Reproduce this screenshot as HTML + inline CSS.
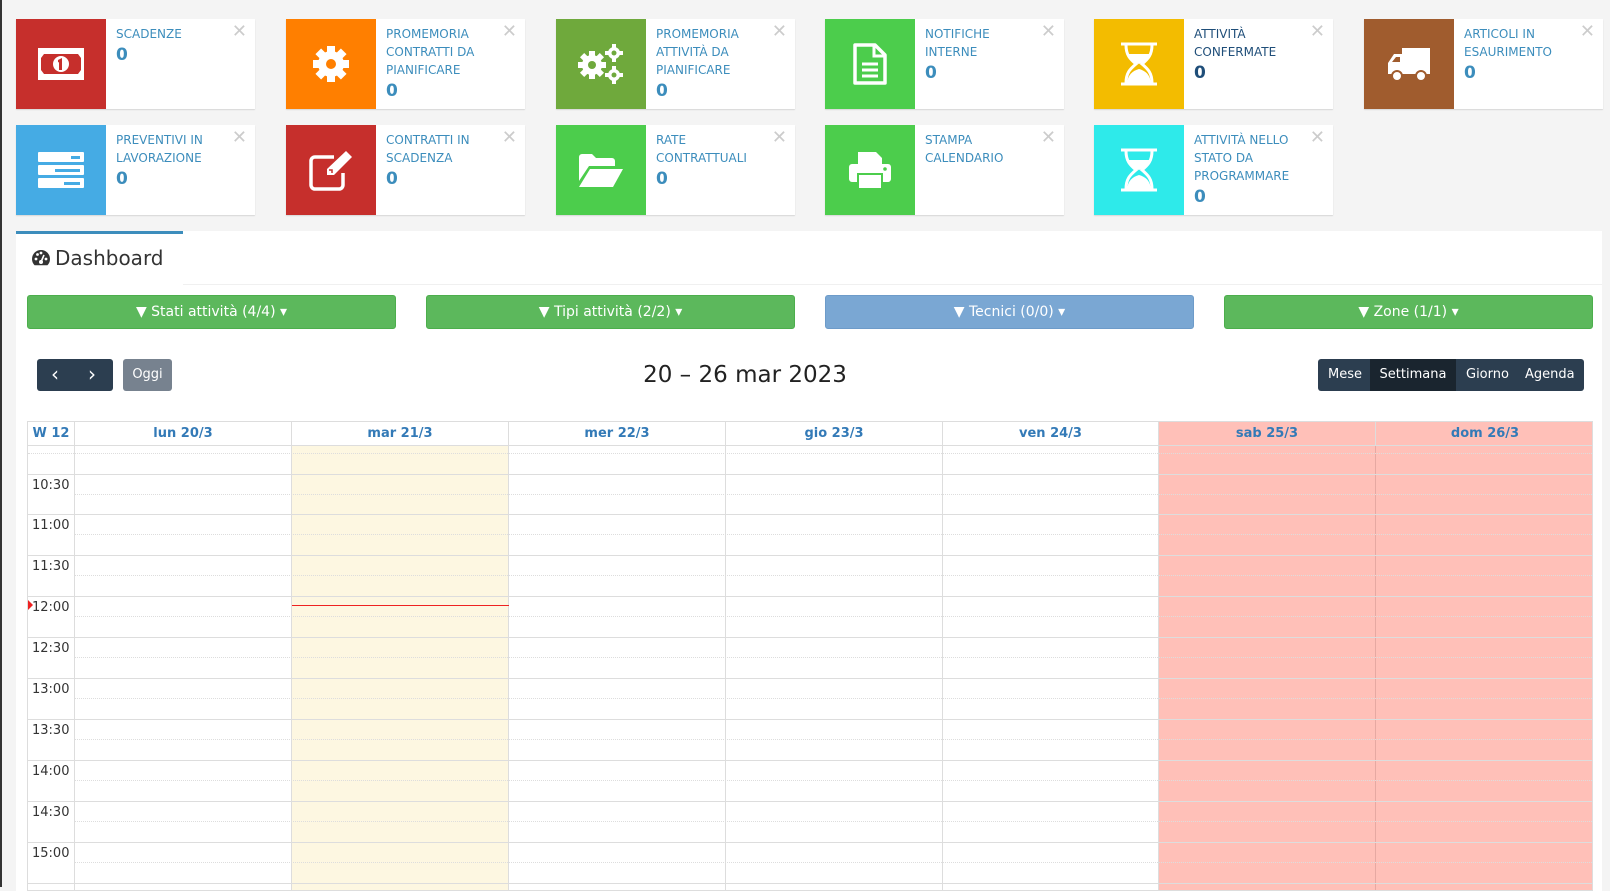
<!DOCTYPE html>
<html><head><meta charset="utf-8"><style>
*{box-sizing:border-box;margin:0;padding:0}
body{width:1610px;height:887px;overflow:hidden;background:#f4f4f4;font-family:"DejaVu Sans","Liberation Sans",sans-serif;position:relative}
.edge{position:absolute;left:0;top:0;width:2px;height:887px;background:#333}
.card{position:absolute;width:239px;height:90px;background:#fff;box-shadow:0 1px 1px rgba(0,0,0,.12)}
.card .ic{position:absolute;left:0;top:0;width:90px;height:90px;display:flex;align-items:center;justify-content:center}
.card .t{position:absolute;left:100px;top:6px;width:120px;font-size:12px;line-height:18px;color:#3c8dbc;text-transform:uppercase}
.card .t b{display:block;font-size:17px;line-height:20px;margin-top:2px}
.card .x{position:absolute;right:8px;top:2px;color:#ccc;font-size:18px}
.panel{position:absolute;left:16px;top:231px;width:1586px;height:660px;background:#fff}
.tab{position:absolute;left:16px;top:231px;width:167px;height:54px;border-top:3px solid #3c8dbc;background:#fff;font-size:20px;color:#333;padding:12px 0 0 15px}
.tabline{position:absolute;left:183px;top:284px;width:1419px;height:1px;background:#f0f0f0}
.fb{position:absolute;top:295px;width:369px;height:34px;border-radius:3px;color:#fff;font-size:14px;text-align:center;line-height:32px;background:#5cb85c;border:1px solid #4cae4c}
.nav{position:absolute;top:359px;height:32px;border-radius:3px;background:#2c3e50;color:#fff}
.title{position:absolute;left:545px;width:400px;top:362px;text-align:center;font-size:23px;color:#222}
.cal{position:absolute;left:27px;top:421px;width:1566px;height:470px;border:1px solid #ddd;overflow:hidden}
.hd{position:absolute;top:0;height:24px;border-right:1px solid #ddd;border-bottom:1px solid #ddd;font-size:13px;font-weight:bold;color:#337ab7;text-align:center;line-height:24px}
.col{position:absolute;top:24px;bottom:0;border-right:1px solid #ddd}
.hl{position:absolute;left:0;right:0;height:1px;background:#ddd}
.dl{position:absolute;left:46px;right:0;height:0;border-top:1px dotted #ddd}
.lb{position:absolute;left:4px;font-size:13px;color:#333}
</style></head><body>
<div class="edge"></div>

<div class="card" style="left:16px;top:19px"><div class="ic" style="background:#c62f2c"><svg width="50" height="36" viewBox="0 0 50 36"><path d="M2 2h46v32H2z" fill="#fff"/><path d="M8 8h34l3 4v12l-3 4H8l-3-4V12z" fill="#c62f2c"/><circle cx="25" cy="18" r="8" fill="#fff"/><path d="M22 14l4-2v12h-3v-8l-1 .5z" fill="#c62f2c"/></svg></div><div class="t">Scadenze<b>0</b></div><div class="x">✕</div></div>
<div class="card" style="left:286px;top:19px"><div class="ic" style="background:#ff7f00"><svg width="40" height="40" viewBox="0 0 40 40"><g fill="#fff"><circle cx="20" cy="20" r="13"/><rect x="16" y="2" width="8" height="36"/><rect x="2" y="16" width="36" height="8"/><rect x="16" y="2" width="8" height="36" transform="rotate(45 20 20)"/><rect x="16" y="2" width="8" height="36" transform="rotate(-45 20 20)"/></g><circle cx="20" cy="20" r="5" fill="#ff7f00"/></svg></div><div class="t">Promemoria contratti da pianificare<b>0</b></div><div class="x">✕</div></div>
<div class="card" style="left:556px;top:19px"><div class="ic" style="background:#6fa93c"><svg width="50" height="42" viewBox="0 0 50 42"><g fill="#fff"><circle cx="16" cy="22" r="10"/><rect x="13" y="8" width="6" height="28"/><rect x="2" y="19" width="28" height="6"/><rect x="13" y="8" width="6" height="28" transform="rotate(45 16 22)"/><rect x="13" y="8" width="6" height="28" transform="rotate(-45 16 22)"/><circle cx="38" cy="10" r="6"/><circle cx="38" cy="32" r="6"/><rect x="36" y="1" width="4" height="18"/><rect x="29" y="8" width="18" height="4"/><rect x="36" y="23" width="4" height="18"/><rect x="29" y="30" width="18" height="4"/></g><circle cx="16" cy="22" r="4" fill="#6fa93c"/><circle cx="38" cy="10" r="2.5" fill="#6fa93c"/><circle cx="38" cy="32" r="2.5" fill="#6fa93c"/></svg></div><div class="t">Promemoria attività da pianificare<b>0</b></div><div class="x">✕</div></div>
<div class="card" style="left:825px;top:19px"><div class="ic" style="background:#4ccd4c"><svg width="36" height="44" viewBox="0 0 36 44"><path d="M3 3h20l10 10v28H3z" fill="none" stroke="#fff" stroke-width="3.5" stroke-linejoin="round"/><path d="M22 3v11h11M10 22h16M10 28h16M10 34h16" stroke="#fff" stroke-width="3" fill="none"/></svg></div><div class="t">Notifiche interne<b>0</b></div><div class="x">✕</div></div>
<div class="card" style="left:1094px;top:19px"><div class="ic" style="background:#f3bc00"><svg width="40" height="46" viewBox="0 0 40 46"><path d="M2 3h36M2 43h36" stroke="#fff" stroke-width="3"/><path d="M7 4c0 10 4 14 10 19c-6 5-10 9-10 19h26c0-10-4-14-10-19c6-5 10-9 10-19" fill="none" stroke="#fff" stroke-width="3"/><path d="M9 13h22c-2 5-6 8-11 10c-5-2-9-5-11-10zM8 42c1-8 5-12 12-14c7 2 11 6 12 14z" fill="#fff"/></svg></div><div class="t" style="color:#1f4e79">Attività confermate<b>0</b></div><div class="x">✕</div></div>
<div class="card" style="left:1364px;top:19px"><div class="ic" style="background:#a05c2e"><svg width="46" height="38" viewBox="0 0 46 38"><path d="M16 3h28v26H16zM2 18l6-9h10v20H2z" fill="#fff"/><path d="M6 17l4-5h4v5z" fill="#a05c2e"/><circle cx="11" cy="31" r="5" fill="#fff" stroke="#a05c2e" stroke-width="2"/><circle cx="35" cy="31" r="5" fill="#fff" stroke="#a05c2e" stroke-width="2"/></svg></div><div class="t">Articoli in esaurimento<b>0</b></div><div class="x">✕</div></div>

<div class="card" style="left:16px;top:125px"><div class="ic" style="background:#45abe4"><svg width="46" height="38" viewBox="0 0 46 38"><g fill="#fff"><rect x="0" y="1" width="46" height="10" rx="1"/><rect x="0" y="14" width="46" height="10" rx="1"/><rect x="0" y="27" width="46" height="10" rx="1"/></g><g fill="#45abe4"><rect x="33" y="5" width="9" height="3"/><rect x="17" y="18" width="25" height="3"/><rect x="26" y="31" width="16" height="3"/></g></svg></div><div class="t">Preventivi in lavorazione<b>0</b></div><div class="x">✕</div></div>
<div class="card" style="left:286px;top:125px"><div class="ic" style="background:#c62f2c"><svg width="46" height="42" viewBox="0 0 46 42"><path d="M26 8H7a4 4 0 0 0-4 4v24a4 4 0 0 0 4 4h24a4 4 0 0 0 4-4V24" fill="none" stroke="#fff" stroke-width="3.5"/><path d="M38 2l6 6-18 18h-7v-6z" fill="#fff"/><path d="M21 21h3v3" stroke="#c62f2c" stroke-width="1.5" fill="none"/></svg></div><div class="t">Contratti in scadenza<b>0</b></div><div class="x">✕</div></div>
<div class="card" style="left:556px;top:125px"><div class="ic" style="background:#4ccd4c"><svg width="48" height="38" viewBox="0 0 48 38"><path d="M2 6a3 3 0 0 1 3-3h10l4 4h16a3 3 0 0 1 3 3v5H12L2 30z" fill="#fff"/><path d="M13 18h33l-10 18H2z" fill="#fff"/></svg></div><div class="t">Rate contrattuali<b>0</b></div><div class="x">✕</div></div>
<div class="card" style="left:825px;top:125px"><div class="ic" style="background:#4ccd4c"><svg width="44" height="40" viewBox="0 0 44 40"><path d="M10 2h18l6 6v6H10z" fill="#fff"/><rect x="1" y="14" width="42" height="18" rx="3" fill="#fff"/><rect x="10" y="24" width="24" height="15" fill="#fff" stroke="#4ccd4c" stroke-width="2"/><circle cx="37" cy="19" r="1.8" fill="#4ccd4c"/></svg></div><div class="t">Stampa calendario</div><div class="x">✕</div></div>
<div class="card" style="left:1094px;top:125px"><div class="ic" style="background:#2eeaea"><svg width="40" height="46" viewBox="0 0 40 46"><path d="M2 3h36M2 43h36" stroke="#fff" stroke-width="3"/><path d="M7 4c0 10 4 14 10 19c-6 5-10 9-10 19h26c0-10-4-14-10-19c6-5 10-9 10-19" fill="none" stroke="#fff" stroke-width="3"/><path d="M9 13h22c-2 5-6 8-11 10c-5-2-9-5-11-10zM8 42c1-8 5-12 12-14c7 2 11 6 12 14z" fill="#fff"/></svg></div><div class="t">Attività nello stato da programmare<b>0</b></div><div class="x">✕</div></div>

<div class="panel"></div>
<div class="tab"><svg width="20" height="17" viewBox="0 0 20 17" style="vertical-align:-1px;margin-right:4px"><path d="M10 1a9 9 0 0 0-9 9c0 2.5 1 4.7 2.6 6.3h12.8A9 9 0 0 0 19 10a9 9 0 0 0-9-9z" fill="#333"/><circle cx="5" cy="10" r="1.4" fill="#fff"/><circle cx="6.5" cy="5.5" r="1.4" fill="#fff"/><circle cx="10" cy="4" r="1.4" fill="#fff"/><circle cx="15" cy="10" r="1.4" fill="#fff"/><path d="M10 13l3-7" stroke="#fff" stroke-width="1.6"/><circle cx="10" cy="13" r="2" fill="#fff"/></svg>Dashboard</div>
<div class="tabline"></div>

<div class="fb" style="left:27px">▼ Stati attività (4/4) ▾</div>
<div class="fb" style="left:426px">▼ Tipi attività (2/2) ▾</div>
<div class="fb" style="left:825px;background:#7aa7d3;border-color:#6d9bc9">▼ Tecnici (0/0) ▾</div>
<div class="fb" style="left:1224px">▼ Zone (1/1) ▾</div>

<div class="nav" style="left:37px;width:76px;font-size:20px;line-height:30px"><span style="position:absolute;left:14px">‹</span><span style="position:absolute;left:51px">›</span></div>
<div class="nav" style="left:123px;width:49px;background:#77828f;font-size:13px;line-height:32px;text-align:center">Oggi</div>
<div class="title">20 – 26 mar 2023</div>
<div class="nav" style="left:1318px;width:266px;font-size:13px;line-height:32px">
<span style="position:absolute;left:10px">Mese</span>
<span style="position:absolute;left:52px;width:86px;top:0;height:32px;background:#1a252f;text-align:center">Settimana</span>
<span style="position:absolute;left:148px">Giorno</span>
<span style="position:absolute;left:207px">Agenda</span></div>

<div class="cal">
<div class="col" style="left:1130px;width:434px;top:0;background:#ffc0b8;border:none"></div>
<div class="col" style="left:264px;width:216px;background:#fdf7e1;border:none"></div>
<div class="hd" style="left:0;width:47px">W 12</div>
<div class="hd" style="left:47px;width:217px">lun 20/3</div>
<div class="hd" style="left:264px;width:217px">mar 21/3</div>
<div class="hd" style="left:481px;width:217px">mer 22/3</div>
<div class="hd" style="left:698px;width:217px">gio 23/3</div>
<div class="hd" style="left:915px;width:216px">ven 24/3</div>
<div class="hd" style="left:1131px;width:217px">sab 25/3</div>
<div class="hd" style="left:1348px;width:218px;border-right:none">dom 26/3</div>
<div class="col" style="left:0;width:47px"></div>
<div class="col" style="left:47px;width:217px"></div>
<div class="col" style="left:264px;width:217px"></div>
<div class="col" style="left:481px;width:217px"></div>
<div class="col" style="left:698px;width:217px"></div>
<div class="col" style="left:915px;width:216px"></div>
<div class="col" style="left:1131px;width:217px;border-color:#e6a9a2"></div>

<div class="dl" style="top:31px;left:0"></div>
<div class="hl" style="top:52px"></div><div class="lb" style="top:56px">10:30</div>
<div class="dl" style="top:72px"></div>
<div class="hl" style="top:92px"></div><div class="lb" style="top:96px">11:00</div>
<div class="dl" style="top:112px"></div>
<div class="hl" style="top:133px"></div><div class="lb" style="top:137px">11:30</div>
<div class="dl" style="top:153px"></div>
<div class="hl" style="top:174px"></div><div class="lb" style="top:178px">12:00</div>
<div class="dl" style="top:194px"></div>
<div class="hl" style="top:215px"></div><div class="lb" style="top:219px">12:30</div>
<div class="dl" style="top:235px"></div>
<div class="hl" style="top:256px"></div><div class="lb" style="top:260px">13:00</div>
<div class="dl" style="top:276px"></div>
<div class="hl" style="top:297px"></div><div class="lb" style="top:301px">13:30</div>
<div class="dl" style="top:317px"></div>
<div class="hl" style="top:338px"></div><div class="lb" style="top:342px">14:00</div>
<div class="dl" style="top:358px"></div>
<div class="hl" style="top:379px"></div><div class="lb" style="top:383px">14:30</div>
<div class="dl" style="top:399px"></div>
<div class="hl" style="top:420px"></div><div class="lb" style="top:424px">15:00</div>
<div class="dl" style="top:440px"></div>
<div class="hl" style="top:461px"></div>
<div style="position:absolute;left:264px;width:217px;top:183px;height:1px;background:#e22"></div>
<div style="position:absolute;left:0;top:178px;width:0;height:0;border-top:5px solid transparent;border-bottom:5px solid transparent;border-left:5px solid #e22"></div>
</div>
</body></html>
